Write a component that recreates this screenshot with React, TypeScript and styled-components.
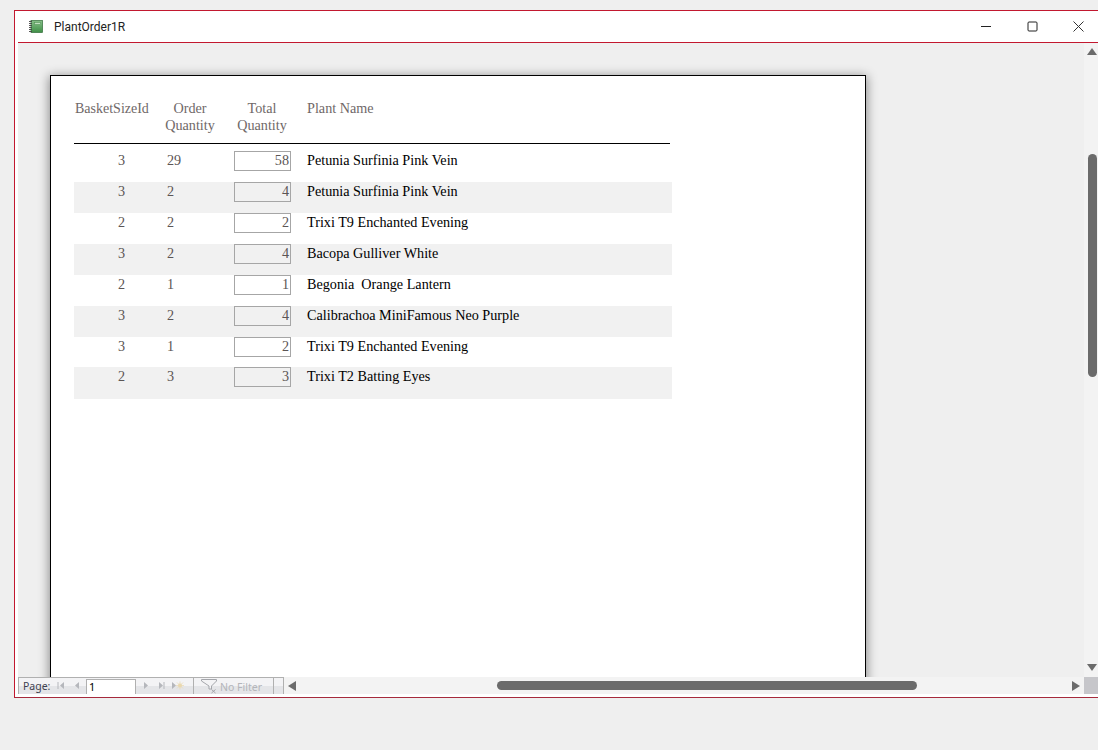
import React from "react";
import styled, { createGlobalStyle } from "styled-components";

const Global = createGlobalStyle`
  html, body { margin: 0; padding: 0; background: #efefef; overflow: hidden; }
  #root { width: 1098px; height: 750px; }
`;

const Stage = styled.div`
  width: 1098px;
  height: 750px;
  padding: 10px 0 0 14px;
  box-sizing: border-box;
  background: #efefef;
`;

const Window = styled.div`
  width: 1084px;
  height: 688px;
  box-sizing: border-box;
  border: solid #c2182f;
  border-width: 1px 0 1px 1px;
  border-bottom-color: #a62a3c;
  background: #fff;
  display: flex;
  flex-direction: column;
  overflow: hidden;
`;

const TitleBar = styled.div`
  height: 32px;
  flex: none;
  box-sizing: border-box;
  margin-left: 3px;
  border-bottom: 1px solid #c2182f;
  display: flex;
  align-items: center;
  padding-left: 11px;
  font: 12px Roboto, "Noto Sans", sans-serif;
  color: #222;
`;

const Title = styled.span`
  margin-left: 11px;
  flex: 1;
`;

const WinButton = styled.button`
  width: 46px;
  height: 31px;
  border: 0;
  padding: 0 0 0 6px;
  background: none;
  display: flex;
  align-items: center;
  justify-content: center;
`;

const Main = styled.div`
  flex: none;
  height: 634px;
  margin-left: 3px;
  display: flex;
  background: #efefef;
`;

const Canvas = styled.div`
  flex: 1;
  overflow: hidden;
  padding: 32px 0 0 32px;
`;

const Page = styled.div`
  width: 816px;
  height: 640px;
  box-sizing: border-box;
  background: #fff;
  border: 1px solid #000;
  box-shadow: 0 2px 10px 1px rgba(0, 0, 0, 0.42);
  padding: 16px 0 0 23px;
  font-family: "Liberation Serif", serif;
  font-size: 14.2px;
`;

const Header = styled.div`
  width: 596px;
  height: 52px;
  box-sizing: border-box;
  border-bottom: 1px solid #000;
  display: grid;
  grid-template-columns: 80px 72px 72px 1fr;
  color: #6f6868;
  line-height: 17px;
  padding-top: 8px;
`;

const HeadCell = styled.div<{ $align?: string }>`
  text-align: ${(p) => p.$align || "center"};
  white-space: nowrap;
`;

const FirstHead = styled(HeadCell)`
  padding-left: 1px;
  font-size: 14px;
`;

const NameHead = styled(HeadCell)`
  padding-left: 9px;
`;

const Rows = styled.div`
  width: 598px;
`;

const Row = styled.div<{ $shaded: boolean; $first?: boolean; $h: number }>`
  height: ${(p) => p.$h}px;
  box-sizing: border-box;
  padding-top: ${(p) => (p.$first ? 7 : 0)}px;
  background: ${(p) => (p.$shaded ? "#f1f1f1" : "#fff")};
  display: grid;
  grid-template-columns: 51px 109px 57px 1fr;
  align-items: start;
  line-height: 18px;
  color: #5b5555;
`;

const Basket = styled.div`
  text-align: right;
`;

const OrderQty = styled.div`
  padding-left: 42px;
`;

const Total = styled.div`
  height: 20px;
  box-sizing: border-box;
  border: 1px solid #a6a6a6;
  text-align: right;
  padding-right: 1px;
  line-height: 16px;
`;

const PlantName = styled.div`
  padding-left: 16px;
  color: #000;
  white-space: pre;
`;

const VScroll = styled.div`
  width: 14px;
  flex: none;
  background: #f3f3f3;
  display: flex;
  flex-direction: column;
  align-items: flex-end;
  padding: 4px 0 6px;
  box-sizing: border-box;
`;

const VThumbTrack = styled.div`
  flex: 1;
  width: 100%;
  padding: 99px 1px 0 4px;
  box-sizing: border-box;
`;

const VThumb = styled.div`
  height: 223px;
  background: #6b6b6b;
  border-radius: 5px;
`;

const ArrowBox = styled.div`
  width: 12px;
  height: 8px;
  display: flex;
  align-items: center;
  justify-content: center;
`;

const Bottom = styled.div`
  flex: none;
  height: 17px;
  margin-left: 3px;
  display: flex;
  background: #f3f3f3;
`;

const Nav = styled.div`
  width: 266px;
  flex: none;
  box-sizing: border-box;
  border-top: 1px solid #b0b0b0;
  border-left: 1px solid #b0b0b0;
  border-right: 1px solid #b0b0b0;
  background: linear-gradient(#f3f3f5 0 50%, #e4e5e8 50% 100%);
  display: flex;
  align-items: stretch;
  font: 10.5px "Noto Sans", "Open Sans", sans-serif;
  color: #3f4250;
`;

const PageLabel = styled.span`
  padding: 1px 0 0 4px;
  width: 32px;
  flex: none;
  box-sizing: border-box;
`;

const NavIcons = styled.div<{ $w: number }>`
  width: ${(p) => p.$w}px;
  flex: none;
  display: flex;
  align-items: center;
  justify-content: center;
  padding-bottom: 2px;
  box-sizing: border-box;
`;

const PageInput = styled.div`
  width: 50px;
  flex: none;
  box-sizing: border-box;
  background: #fff;
  border: 1px solid #b0b0b0;
  border-bottom: 0;
  margin-top: 1px;
  padding: 0 0 0 2px;
  color: #000;
  font-size: 11px;
  line-height: 14px;
`;

const FilterBox = styled.div`
  width: 81px;
  flex: none;
  box-sizing: border-box;
  border-left: 1px solid #b0b0b0;
  border-right: 1px solid #b0b0b0;
  display: flex;
  align-items: flex-start;
  padding-left: 7px;
  color: #b3b5ba;
  line-height: 18px;
`;

const FilterText = styled.span`
  margin-left: 2px;
`;

const HScroll = styled.div`
  flex: 1;
  display: flex;
  align-items: center;
  background: #f3f3f3;
  padding: 0 4px 0 4px;
`;

const HTrack = styled.div`
  flex: 1;
  padding: 0 155px 0 201px;
`;

const HThumb = styled.div`
  height: 9px;
  background: #6b6b6b;
  border-radius: 5px;
`;

const Corner = styled.div`
  width: 14px;
  height: 17px;
  flex: none;
  background: #c6c6ca;
`;

const rows = [
  { b: 3, o: 29, t: 58, n: "Petunia Surfinia Pink Vein", h: 38 },
  { b: 3, o: 2, t: 4, n: "Petunia Surfinia Pink Vein", h: 31 },
  { b: 2, o: 2, t: 2, n: "Trixi T9 Enchanted Evening", h: 31 },
  { b: 3, o: 2, t: 4, n: "Bacopa Gulliver White", h: 31 },
  { b: 2, o: 1, t: 1, n: "Begonia  Orange Lantern", h: 31 },
  { b: 3, o: 2, t: 4, n: "Calibrachoa MiniFamous Neo Purple", h: 31 },
  { b: 3, o: 1, t: 2, n: "Trixi T9 Enchanted Evening", h: 30 },
  { b: 2, o: 3, t: 3, n: "Trixi T2 Batting Eyes", h: 32 },
];

const BackGlyphs = () => (
  <svg width="24" height="9" viewBox="0 0 24 9">
    <path d="M1 1v7" stroke="#b5b7bc" strokeWidth="1" />
    <path d="M7 1v7L3 4.5z M22 1v7l-4-3.5z" fill="#b5b7bc" />
  </svg>
);

const ForwardGlyphs = () => (
  <svg width="46" height="11" viewBox="0 0 46 11">
    <path d="M2 2v7l4-3.5z M17 2v7l4-3.5z M30 2v7l4-3.5z" fill="#b5b7bc" />
    <path d="M22 2v7" stroke="#b5b7bc" />
    <circle cx="38" cy="5.5" r="2" fill="#ead9b0" />
    <path d="M38 1.5v8M34 5.5h8M35 2.5l6 6M41 2.5l-6 6" stroke="#ead9b0" strokeWidth=".7" />
  </svg>
);

export default function App() {
  return (
    <Stage>
      <Global />
      <Window>
        <TitleBar>
          <svg width="14" height="13" viewBox="0 0 14 13">
            <defs>
              <linearGradient id="book" x1="0" y1="0" x2="0" y2="1">
                <stop offset="0" stopColor="#86c088" />
                <stop offset="1" stopColor="#3f8f47" />
              </linearGradient>
            </defs>
            <rect x="2" y="0.5" width="11.5" height="12" fill="url(#book)" stroke="#2f6b37" strokeWidth="0.7" />
            <path d="M0 1.5h3M0 3.5h3M0 5.5h3M0 7.5h3M0 9.5h3M0 11.5h3" stroke="#444" strokeWidth="0.9" />
            <rect x="5.5" y="2.5" width="6" height="2" fill="#bfe0bf" stroke="#4b8a4c" strokeWidth="0.5" />
          </svg>
          <Title>PlantOrder1R</Title>
          <WinButton aria-label="Minimize">
            <svg width="12" height="12" viewBox="0 0 12 12">
              <path d="M1 5.5h10" stroke="#222" />
            </svg>
          </WinButton>
          <WinButton aria-label="Maximize">
            <svg width="11" height="11" viewBox="0 0 11 11">
              <rect x="1" y="1" width="9" height="9" rx="1" fill="none" stroke="#222" />
            </svg>
          </WinButton>
          <WinButton aria-label="Close">
            <svg width="11" height="11" viewBox="0 0 11 11">
              <path d="M.5.5l10 10M10.5.5l-10 10" stroke="#333" />
            </svg>
          </WinButton>
        </TitleBar>
        <Main>
          <Canvas>
            <Page>
              <Header>
                <FirstHead $align="left">BasketSizeId</FirstHead>
                <HeadCell>
                  Order
                  <br />
                  Quantity
                </HeadCell>
                <HeadCell>
                  Total
                  <br />
                  Quantity
                </HeadCell>
                <NameHead $align="left">Plant Name</NameHead>
              </Header>
              <Rows>
                {rows.map((r, i) => (
                  <Row key={i} $shaded={i % 2 === 1} $first={i === 0} $h={r.h}>
                    <Basket>{r.b}</Basket>
                    <OrderQty>{r.o}</OrderQty>
                    <Total>{r.t}</Total>
                    <PlantName>{r.n}</PlantName>
                  </Row>
                ))}
              </Rows>
            </Page>
          </Canvas>
          <VScroll>
            <ArrowBox>
              <svg width="10" height="7" viewBox="0 0 10 7">
                <path d="M5 0l5 7H0z" fill="#6b6b6b" />
              </svg>
            </ArrowBox>
            <VThumbTrack>
              <VThumb />
            </VThumbTrack>
            <ArrowBox>
              <svg width="10" height="7" viewBox="0 0 10 7">
                <path d="M5 7L0 0h10z" fill="#6b6b6b" />
              </svg>
            </ArrowBox>
          </VScroll>
        </Main>
        <Bottom>
          <Nav>
            <PageLabel>Page:</PageLabel>
            <NavIcons $w={35}>
              <BackGlyphs />
            </NavIcons>
            <PageInput>1</PageInput>
            <NavIcons $w={57}>
              <ForwardGlyphs />
            </NavIcons>
            <FilterBox>
              <svg width="17" height="16" viewBox="0 0 17 16">
                <path d="M.5 1.5h15v1.5L10.5 8v3H8V8L.5 3z" fill="#f3f3f5" stroke="#a4a6ab" />
                <path d="M10.5 11.5l4 3.5M14.5 11.5l-4 3.5" stroke="#a4a6ab" />
              </svg>
              <FilterText>No Filter</FilterText>
            </FilterBox>
          </Nav>
          <HScroll>
            <svg width="8" height="10" viewBox="0 0 8 10">
              <path d="M0 5l8-5v10z" fill="#6b6b6b" />
            </svg>
            <HTrack>
              <HThumb />
            </HTrack>
            <svg width="8" height="10" viewBox="0 0 8 10">
              <path d="M8 5L0 0v10z" fill="#6b6b6b" />
            </svg>
          </HScroll>
          <Corner />
        </Bottom>
      </Window>
    </Stage>
  );
}
